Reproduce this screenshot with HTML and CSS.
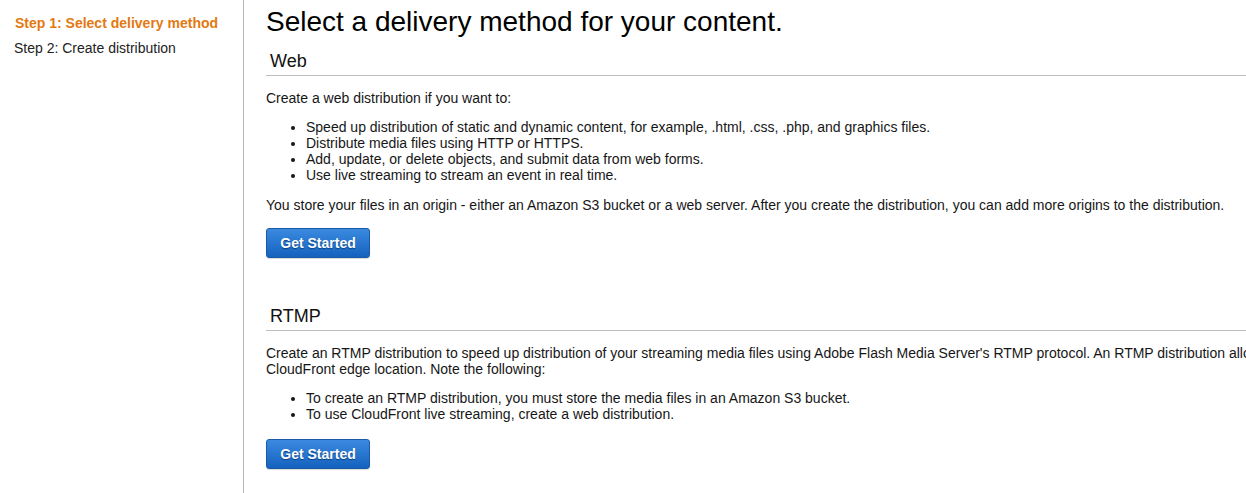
FILE: index.html
```html
<!DOCTYPE html>
<html>
<head>
<meta charset="utf-8">
<title>Create Distribution</title>
<link rel="stylesheet" href="styles.css">
</head>
<body>
<div class="wizard">
  <div class="steps">
    <div class="step current">Step 1: Select delivery method</div>
    <div class="step">Step 2: Create distribution</div>
  </div>
  <div class="main">
    <h1>Select a delivery method for your content.</h1>

    <div class="section">
      <h2>Web</h2>
      <p>Create a web distribution if you want to:</p>
      <ul>
        <li>Speed up distribution of static and dynamic content, for example, .html, .css, .php, and graphics files.</li>
        <li>Distribute media files using HTTP or HTTPS.</li>
        <li>Add, update, or delete objects, and submit data from web forms.</li>
        <li>Use live streaming to stream an event in real time.</li>
      </ul>
      <p>You store your files in an origin - either an Amazon S3 bucket or a web server. After you create the distribution, you can add more origins to the distribution.</p>
      <button class="btn">Get Started</button>
    </div>

    <div class="section rtmp">
      <h2>RTMP</h2>
      <p>Create an RTMP distribution to speed up distribution of your streaming media files using Adobe Flash Media Server's RTMP protocol. An RTMP distribution allows an end user to begin playing a media file before the file has finished downloading from a<br>CloudFront edge location. Note the following:</p>
      <ul>
        <li>To create an RTMP distribution, you must store the media files in an Amazon S3 bucket.</li>
        <li>To use CloudFront live streaming, create a web distribution.</li>
      </ul>
      <button class="btn">Get Started</button>
    </div>
  </div>
</div>
</body>
</html>
```

FILE: styles.css
```css
html, body {
  margin: 0;
  padding: 0;
  overflow: hidden;
  background: #fff;
}
body {
  font-family: "Liberation Sans", Arial, sans-serif;
  font-size: 14px;
  color: #161616;
}
.wizard {
  display: flex;
  width: 1900px;
  min-height: 493px;
}
.steps {
  width: 244px;
  flex: none;
  border-right: 1px solid #b5b5b5;
  padding-top: 15px;
  box-sizing: border-box;
}
.step {
  padding-left: 14px;
  line-height: 16px;
  margin-bottom: 9px;
  color: #222;
}
.step.current {
  color: #e47911;
  font-weight: bold;
  padding-left: 15px;
}
.main {
  width: 1640px;
  padding-left: 22px;
}
h1 {
  font-size: 28px;
  font-weight: normal;
  margin: 6px 0 0;
  line-height: 32px;
  color: #000;
}
h2 {
  font-size: 18px;
  font-weight: normal;
  margin: 0;
  padding: 0 0 4px 4px;
  line-height: 20px;
  border-bottom: 1px solid #bdbdbd;
  color: #111;
}
.section {
  margin-top: 13px;
}
.section.rtmp {
  margin-top: 48px;
}
p {
  margin: 14px 0 0;
  line-height: 16px;
}
ul {
  margin: 13px 0 0;
  padding-left: 40px;
  line-height: 16px;
}
.btn {
  display: block;
  margin-top: 15px;
  width: 104px;
  height: 30px;
  border: 1px solid #1a5aa6;
  border-radius: 3px;
  background: linear-gradient(#3b8ae0, #1462be);
  color: #fff;
  font-family: "Liberation Sans", Arial, sans-serif;
  font-size: 14px;
  font-weight: bold;
  text-shadow: 0 1px 1px #0a3f7f;
  box-shadow: 0 1px 1px rgba(0,0,0,0.15);
  padding: 0;
}
ul + .btn {
  margin-top: 17px;
}
```
